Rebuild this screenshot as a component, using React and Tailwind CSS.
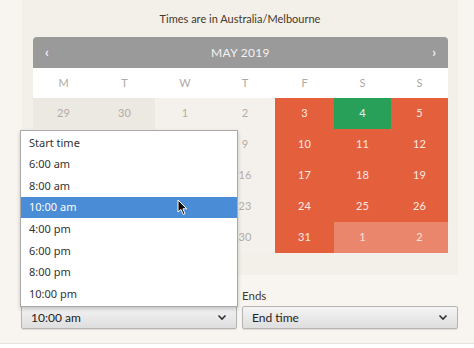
import React from "react";

const hum = { fontFamily: "Lato, 'Open Sans', sans-serif" };

function Chevron() {
  return (
    <svg width="10" height="7" viewBox="0 0 10 7" className="shrink-0">
      <path d="M1.5 1.5 L5 5 L8.5 1.5" fill="none" stroke="#333" strokeWidth="1.6" />
    </svg>
  );
}

function Cell({ n, kind }) {
  const styles = {
    prev: "bg-[#ece8e2] text-[#b3ada6]",
    past: "bg-[#f4f1ec] text-[#b3ada6]",
    red: "bg-[#e4603d] text-[#fde9e2]",
    green: "bg-[#29a05a] text-[#e6f6ec]",
    next: "bg-[#e9866b] text-[#fbe3da]",
  };
  return (
    <div className={`h-[31px] flex items-center justify-center text-[11px] ${styles[kind]}`}>{n}</div>
  );
}

export default function App() {
  // cells fully hidden under the open dropdown are left blank
  const rows = [
    [["29", "prev"], ["30", "prev"], ["1", "past"], ["2", "past"], ["3", "red"], ["4", "green"], ["5", "red"]],
    [["", "past"], ["", "past"], ["", "past"], ["9", "past"], ["10", "red"], ["11", "red"], ["12", "red"]],
    [["", "past"], ["", "past"], ["", "past"], ["16", "past"], ["17", "red"], ["18", "red"], ["19", "red"]],
    [["", "past"], ["", "past"], ["", "past"], ["23", "past"], ["24", "red"], ["25", "red"], ["26", "red"]],
    [["", "past"], ["", "past"], ["", "past"], ["30", "past"], ["31", "red"], ["1", "next"], ["2", "next"]],
  ];
  const options = ["Start time", "6:00 am", "8:00 am", "10:00 am", "4:00 pm", "6:00 pm", "8:00 pm", "10:00 pm"];
  return (
    <div className="relative w-[474px] h-[348px] overflow-hidden bg-[#f8f5f0]" style={hum}>
      <div className="ml-[22px] w-[436px] h-[275px] bg-[#f3efe9] pt-[11px]">
        <div className="text-center text-[11px] text-[#45382c] leading-[16px]">Times are in Australia/Melbourne</div>
        <div className="ml-[11px] w-[415px] mt-[10px]">
          <div className="h-[31px] rounded-t-[4px] bg-[#9a9a9a] flex items-center justify-between px-[12px] text-[#f3f3f3]">
            <span className="text-[13px] font-bold leading-none">‹</span>
            <span className="text-[12px] tracking-[0.3px]">MAY 2019</span>
            <span className="text-[13px] font-bold leading-none">›</span>
          </div>
          <div className="h-[30px] bg-white grid grid-cols-[61px_61px_60px_60px_59px_57px_57px] text-[11px] text-[#b0aaa4]">
            {["M", "T", "W", "T", "F", "S", "S"].map((d, i) => (
              <div key={i} className="flex items-center justify-center">{d}</div>
            ))}
          </div>
          <div className="grid grid-cols-[61px_61px_60px_60px_59px_57px_57px]">
            {rows.flat().map(([n, k], i) => (
              <Cell key={i} n={n} kind={k} />
            ))}
          </div>
        </div>
      </div>
      <div className="flex gap-[5px] ml-[21px] w-[437px] mt-[14px]">
        <div className="flex-1 flex flex-col">
          <div className="h-[17px]" />
          <div className="h-[23px] rounded-[2px] border border-[#b4b4b4] bg-gradient-to-b from-[#f4f4f4] to-[#dedede] flex items-center justify-between pl-[9px] pr-[9px] text-[12px] text-[#222] shadow-[0_1px_1px_rgba(0,0,0,0.1)]">
            <span>10:00 am</span>
            <Chevron />
          </div>
        </div>
        <div className="flex-1 flex flex-col">
          <div className="text-[11.5px] text-[#45382c] h-[17px] leading-[14px]">Ends</div>
          <div className="h-[23px] rounded-[2px] border border-[#b4b4b4] bg-gradient-to-b from-[#f4f4f4] to-[#dedede] flex items-center justify-between pl-[9px] pr-[9px] text-[12px] text-[#222] shadow-[0_1px_1px_rgba(0,0,0,0.1)]">
            <span>End time</span>
            <Chevron />
          </div>
        </div>
      </div>
      <div className="absolute left-0 right-0 top-[343px] h-px bg-[#e6e2dc]" />
      <div className="absolute left-0 right-0 top-[344px] bottom-0 bg-white" />

      <div
        className="absolute left-[20px] top-[130px] w-[218px] bg-white border border-[#a9a9a9] shadow-[0_2px_4px_rgba(0,0,0,0.2)] py-[1px]"
        style={{ fontFamily: "'Noto Sans', sans-serif" }}
      >
        {options.map((o, i) => (
          <div
            key={i}
            className={`h-[21.6px] flex items-center pl-[8px] text-[11px] ${i === 3 ? "bg-[#4a8cd6] text-white" : "text-[#333]"}`}
          >
            {o}
          </div>
        ))}
      </div>

      <svg className="absolute left-[177px] top-[199px]" width="12" height="17" viewBox="0 0 12 17">
        <path d="M1 1 L1 13 L4 10.5 L6.2 15.5 L8 14.7 L5.9 9.8 L9.8 9.8 Z" fill="#111" stroke="#fff" strokeWidth="1" />
      </svg>
    </div>
  );
}
